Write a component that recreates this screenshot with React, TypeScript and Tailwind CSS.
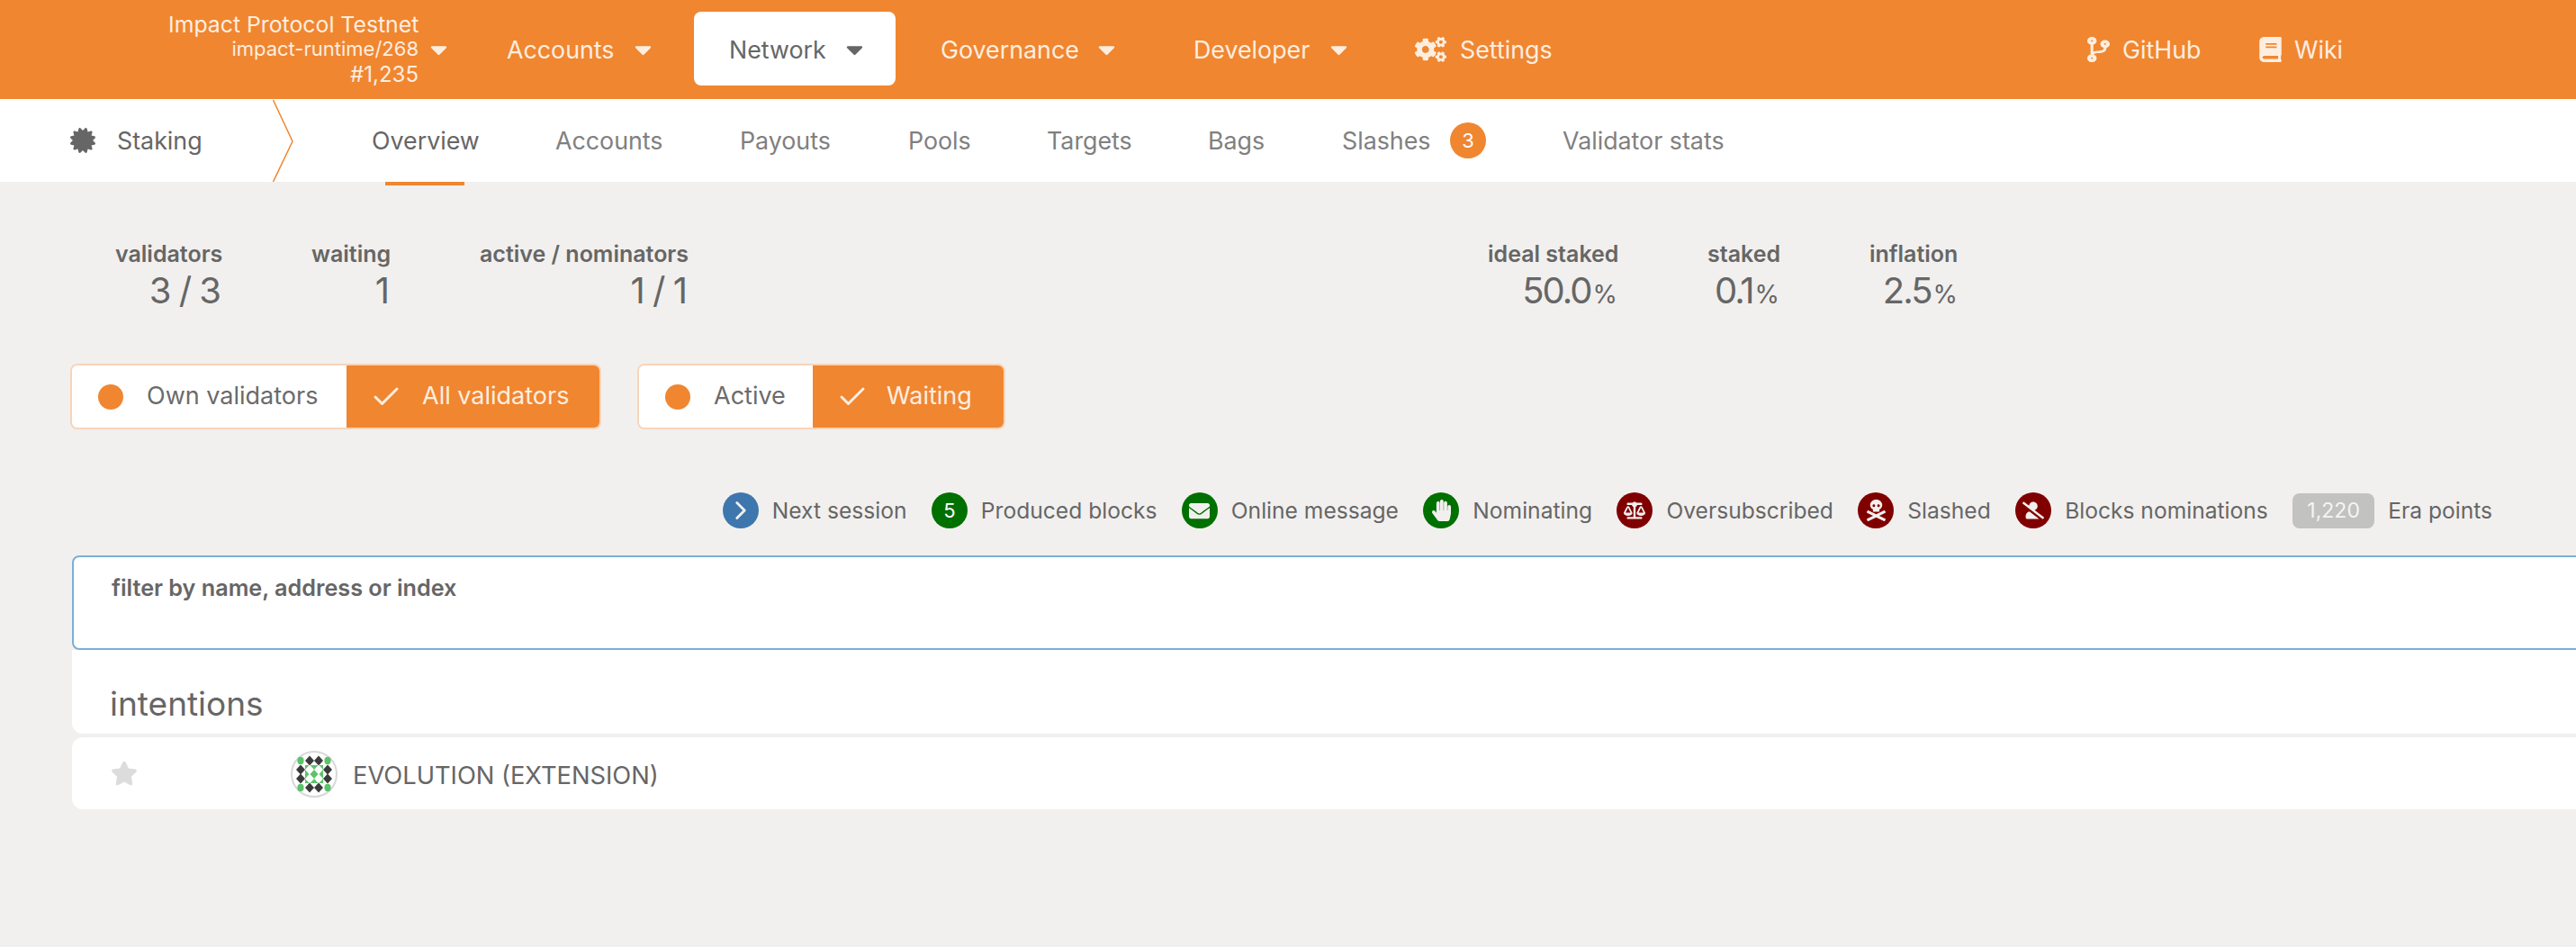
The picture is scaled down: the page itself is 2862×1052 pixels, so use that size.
import {
  FaBalanceScale,
  FaBook,
  FaCaretDown,
  FaCertificate,
  FaCodeBranch,
  FaCogs,
  FaEnvelope,
  FaHandPaper,
  FaSkullCrossbones,
  FaStar,
  FaUserSlash,
} from "react-icons/fa";
import { Check, ChevronRight } from "lucide-react";
import type { ReactNode } from "react";

const navItems = [
  { label: "Accounts", width: "w-[208px]", textWidth: "w-[120px]" },
  { label: "Network", width: "w-[274px]", textWidth: "w-[108px]", active: true },
  { label: "Governance", width: "w-[281px]", textWidth: "w-[153px]" },
  { label: "Developer", width: "w-[246px]", textWidth: "w-[130px]" },
];

const tabs = [
  { label: "Overview", active: true, width: "w-[119px]" },
  { label: "Accounts", width: "w-[120px]" },
  { label: "Payouts", width: "w-[102px]" },
  { label: "Pools", width: "w-[69px]" },
  { label: "Targets", width: "w-[94px]" },
  { label: "Bags", width: "w-[64px]" },
];

function Stat({ label, className, children }: { label: string; className: string; children: ReactNode }) {
  return (
    <div className={`text-right whitespace-nowrap ${className}`}>
      <div className="text-[25px] leading-[32px] font-semibold">{label}</div>
      <div className="text-[40px] leading-[48px] mt-[1px] [word-spacing:-3px]">{children}</div>
    </div>
  );
}

function Percent({ value }: { value: string }) {
  return (
    <>
      <span className="tracking-[-2px] mr-[2px]">{value}</span>
      <span className="text-[28px] leading-none">%</span>
    </>
  );
}

function Toggle({
  label,
  on,
  width,
  gap,
}: {
  label: string;
  on?: boolean;
  width: string;
  gap: string;
}) {
  return (
    <div
      className={`flex items-center h-full ${width} ${gap} ${
        on ? "bg-[#f08630] text-[#fdeee0] pl-[26px]" : "bg-white text-[#6b6b6b] pl-[29px]"
      }`}
    >
      {on ? (
        <Check size={36} strokeWidth={2} className="shrink-0" />
      ) : (
        <span className="w-[28px] h-[28px] rounded-full bg-[#f08630] shrink-0" />
      )}
      <span className="text-[27px] whitespace-nowrap">{label}</span>
    </div>
  );
}

function Legend({ icon, color, label }: { icon: ReactNode; color: string; label: string }) {
  return (
    <div className="flex items-center gap-[15px]">
      <span className={`w-[40px] h-[40px] rounded-full flex items-center justify-center text-[#f2f0ee] ${color}`}>
        {icon}
      </span>
      <span className="text-[24.6px] whitespace-nowrap">{label}</span>
    </div>
  );
}

function Identicon() {
  const xs = [11, 21, 31, 41];
  return (
    <svg viewBox="0 0 52 52" className="w-[52px] h-[52px] shrink-0">
      <circle cx="26" cy="26" r="25" fill="#fff" stroke="#d8d8d8" strokeWidth="2" />
      <rect x="16" y="16" width="20" height="20" fill="#5bc46a" />
      {xs.map((y) =>
        xs.map((x) => {
          const corner = (x === 11 || x === 41) && (y === 11 || y === 41);
          const inner = (x === 21 || x === 31) && (y === 21 || y === 31);
          if (corner) {
            return <ellipse key={`${x}-${y}`} cx={x} cy={y} rx="3.6" ry="4.2" fill="#5bc46a" />;
          }
          return (
            <path
              key={`${x}-${y}`}
              d={`M${x} ${y - 5.4}L${x + 5} ${y}L${x} ${y + 5.4}L${x - 5} ${y}Z`}
              fill={inner ? "#fff" : "#3a3a3a"}
            />
          );
        }),
      )}
    </svg>
  );
}

export default function App() {
  return (
    <div className="w-full h-screen overflow-hidden bg-[#f2f0ee] text-[#666] font-['Inter',sans-serif]">
      <header className="h-[110px] bg-[#f08630] text-[#fdeee0] flex items-center">
        <div className="flex items-center ml-[187px] w-[376px]">
          <div className="w-[278px] text-right text-[22px] leading-[27.5px] whitespace-nowrap">
            <div className="text-[24.8px]">Impact Protocol Testnet</div>
            <div>impact-runtime/268</div>
            <div className="text-[24px]">#1,235</div>
          </div>
          <FaCaretDown className="w-[19px] h-[30px] ml-[13px]" />
        </div>
        <nav className="flex items-center text-[26.8px]">
          {navItems.map((item) => (
            <div key={item.label} className={`flex items-center ${item.width}`}>
              <div
                className={`flex items-center ${
                  item.active ? "h-[82px] mb-[2px] pt-[2px] bg-white text-[#666] rounded-[8px] pl-[39px] w-[224px]" : "h-[82px]"
                }`}
              >
                <span className={`whitespace-nowrap ${item.textWidth}`}>{item.label}</span>
                <FaCaretDown className="w-[19px] h-[30px] ml-[22px]" />
              </div>
            </div>
          ))}
          <FaCogs className="w-[35px] h-[28px] mr-[15px]" />
          <span>Settings</span>
        </nav>
        <div className="flex items-center text-[26.8px] ml-auto pr-[259px]">
          <FaCodeBranch preserveAspectRatio="none" className="w-[25px] h-[28px] mr-[14px]" />
          <span className="w-[152px]">GitHub</span>
          <FaBook className="w-[25px] h-[28px] mr-[14px]" />
          <span className="w-[54px] whitespace-nowrap">Wiki</span>
        </div>
      </header>

      <div className="h-[92px] bg-white flex items-stretch">
        <div className="flex items-center w-[303px] pl-[78px] text-[#666]">
          <FaCertificate className="w-[28px] h-[28px] mr-[24px]" />
          <span className="text-[26.8px]">Staking</span>
        </div>
        <svg viewBox="0 0 24 92" className="w-[24px] h-[92px] shrink-0" fill="none">
          <path d="M0.5 1 L22 47 L0.5 92" stroke="#f08630" strokeWidth="1.5" />
        </svg>
        <div className="flex items-center ml-[86px] gap-[85px] text-[26.8px] text-[#808080]">
          {tabs.map((tab) => (
            <div
              key={tab.label}
              className={`relative h-full flex items-center whitespace-nowrap ${tab.width} ${tab.active ? "text-[#666]" : ""}`}
            >
              {tab.label}
              {tab.active && <span className="absolute -bottom-[4px] left-[15px] w-[88px] h-[4px] bg-[#f08630]" />}
            </div>
          ))}
          <div className="flex items-center gap-[21px] whitespace-nowrap">
            <span className="w-[99px]">Slashes</span>
            <span className="w-[40px] h-[40px] rounded-full bg-[#f08630] text-white text-[22px] flex items-center justify-center">
              3
            </span>
          </div>
          <div className="whitespace-nowrap">Validator stats</div>
        </div>
      </div>

      <main className="w-[3000px]">
        <section className="flex pt-[64px] pl-[128px]">
          <div className="flex gap-[100px]">
            <Stat label="validators" className="w-[118px]">3 / 3</Stat>
            <Stat label="waiting" className="w-[87px]">1</Stat>
            <Stat label="active / nominators" className="w-[231px]">1 / 1</Stat>
          </div>
          <div className="flex gap-[100px] ml-[889px]">
            <Stat label="ideal staked" className="w-[144px]"><Percent value="50.0" /></Stat>
            <Stat label="staked" className="w-[80px]"><Percent value="0.1" /></Stat>
            <Stat label="inflation" className="w-[98px]"><Percent value="2.5" /></Stat>
          </div>
        </section>

        <section className="flex h-[73px] mt-[57px] ml-[78px] gap-[40px]">
          <div className="flex h-full rounded-[8px] border-2 border-[#f8d4b8] overflow-hidden">
            <Toggle label="Own validators" width="w-[305px]" gap="gap-[26px]" />
            <Toggle label="All validators" on width="w-[281px]" gap="gap-[22px]" />
          </div>
          <div className="flex h-full rounded-[8px] border-2 border-[#f8d4b8] overflow-hidden">
            <Toggle label="Active" width="w-[193px]" gap="gap-[26px]" />
            <Toggle label="Waiting" on width="w-[212px]" gap="gap-[20px]" />
          </div>
        </section>

        <section className="w-[2862px] flex justify-end items-center gap-[27.4px] pr-[93px] mt-[70px] h-[40px]">
          <Legend color="bg-[#3e77ae]" label="Next session" icon={<ChevronRight size={34} strokeWidth={2} />} />
          <Legend
            color="bg-[#007000]"
            label="Produced blocks"
            icon={<span className="text-[22px] text-[#fff]">5</span>}
          />
          <Legend color="bg-[#007000]" label="Online message" icon={<FaEnvelope className="w-[23px] h-[23px]" />} />
          <Legend color="bg-[#007000]" label="Nominating" icon={<FaHandPaper className="w-[21px] h-[24px]" />} />
          <Legend color="bg-[#800000]" label="Oversubscribed" icon={<FaBalanceScale className="w-[24px] h-[20px]" />} />
          <Legend color="bg-[#800000]" label="Slashed" icon={<FaSkullCrossbones className="w-[21px] h-[24px]" />} />
          <Legend color="bg-[#800000]" label="Blocks nominations" icon={<FaUserSlash className="w-[24px] h-[20px]" />} />
          <div className="flex items-center gap-[15px]">
            <span className="w-[91px] h-[39px] rounded-[8px] bg-[#c2c2c0] text-[#f5f5f5] text-[23px] flex items-center justify-center">
              1,220
            </span>
            <span className="text-[24.6px] whitespace-nowrap">Era points</span>
          </div>
        </section>

        <section className="ml-[80px] mt-[30px]">
          <div className="h-[105px] rounded-[8px] border-2 border-[#7aaedb] bg-white pl-[42px] pt-[18px]">
            <div className="text-[25.2px] leading-[32px] font-semibold">filter by name, address or index</div>
          </div>
          <div className="h-[93px] rounded-b-[12px] bg-white pl-[42px] pt-[41px]">
            <h2 className="text-[37px] leading-[38px] font-normal">intentions</h2>
          </div>
          <div className="h-[80px] mt-[4px] rounded-[12px] bg-white flex items-center pl-[43px]">
            <FaStar className="w-[30px] h-[28px] text-[#dcdcdc] shrink-0" />
            <div className="ml-[170px] flex items-center gap-[17px] mt-[1px]">
              <Identicon />
              <span className="text-[27.3px] whitespace-nowrap mt-[5px]">EVOLUTION (EXTENSION)</span>
            </div>
          </div>
        </section>
      </main>
    </div>
  );
}
